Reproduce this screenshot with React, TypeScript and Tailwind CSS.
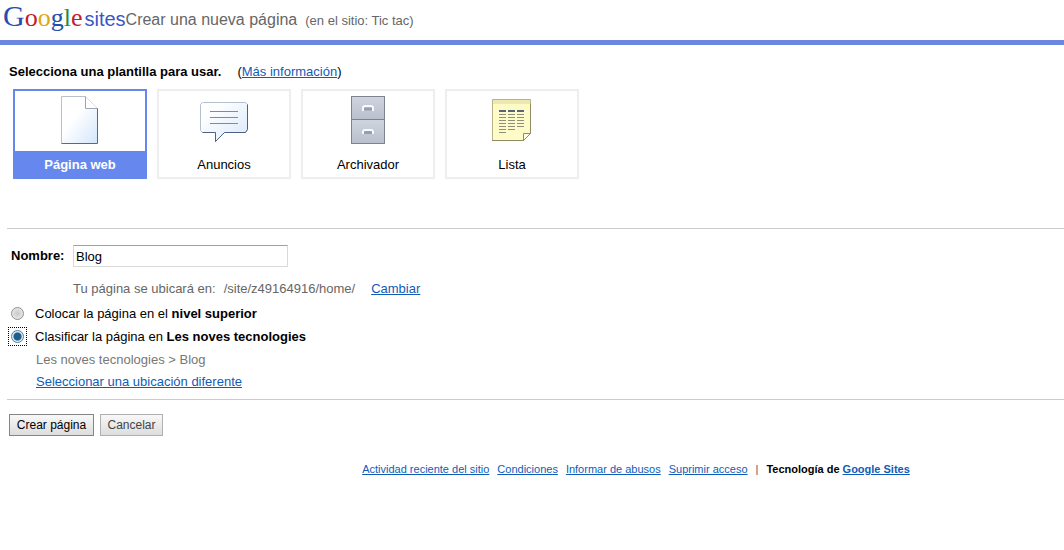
import { useState } from "react";
import type { ReactNode } from "react";

type Template = {
  id: string;
  label: string;
  icon: ReactNode;
};

const logoLetters = [
  { letter: "G", className: "text-[30px] text-[#1f4fb0]" },
  { letter: "o", className: "text-[#c3202f]" },
  { letter: "o", className: "text-[#dfa70f]" },
  { letter: "g", className: "text-[#1f4fb0]" },
  { letter: "l", className: "text-[#22903a]" },
  { letter: "e", className: "text-[#c3202f]" },
];

const footerLinks = [
  "Actividad reciente del sitio",
  "Condiciones",
  "Informar de abusos",
  "Suprimir acceso",
];

function PageIcon() {
  return (
    <svg width="40" height="50" viewBox="0 0 40 50" aria-hidden="true">
      <defs>
        <linearGradient id="page-fill" x1="0" y1="0" x2="1" y2="1">
          <stop offset="0.4" stopColor="#ffffff" />
          <stop offset="1" stopColor="#d3e6fb" />
        </linearGradient>
      </defs>
      <path d="M1.500 1.500H25.500L37.500 13.500V48.500H1.500Z" fill="url(#page-fill)" />
      <path d="M1.500 48.500V1.500H25.500L37.500 13.500" fill="none" stroke="#b9bfcb" />
      <path d="M25.500 1.500V13.500H37.500" fill="#ffffff" stroke="#9aa5b8" />
      <path d="M37.500 13.500V48.500H1.500" fill="none" stroke="#566a86" />
    </svg>
  );
}

function BubbleIcon() {
  return (
    <svg width="50" height="50" viewBox="0 0 50 50" aria-hidden="true">
      <defs>
        <linearGradient id="bubble-fill" x1="0" y1="0" x2="1" y2="1">
          <stop offset="0.2" stopColor="#ffffff" />
          <stop offset="1" stopColor="#d8e8fb" />
        </linearGradient>
      </defs>
      <path
        d="M3.500 7.500H46.500L48.500 9.500V34.500L46.500 37.500H25.500L16.500 46.500V37.500H3.500L1.500 35.500V9.500Z"
        fill="url(#bubble-fill)"
        stroke="#b4bfd0"
      />
      <path d="M48.500 9.500V34.500L46.500 37.500H25.500L16.500 46.500V37.500H3.500" fill="none" stroke="#4d6280" />
      <path d="M11 16.500H39M11 22.500H39M11 28.500H39" stroke="#7d8ba1" />
    </svg>
  );
}

function CabinetIcon() {
  return (
    <svg width="34" height="50" viewBox="0 0 34 50" aria-hidden="true">
      <defs>
        <linearGradient id="drawer-fill" x1="0" y1="0" x2="0" y2="1">
          <stop offset="0" stopColor="#cfd4df" />
          <stop offset="1" stopColor="#b9bfcc" />
        </linearGradient>
      </defs>
      <rect x="0.500" y="1.500" width="33" height="23" fill="url(#drawer-fill)" stroke="#7d828e" />
      <rect x="0.500" y="24.500" width="33" height="24" fill="url(#drawer-fill)" stroke="#7d828e" />
      <path d="M13 14H21M13 37.500H21" stroke="#979dab" strokeWidth="3" />
      <path
        d="M12 16V13Q12 11 14 11H20Q22 11 22 13V16M12 39V37Q12 35 14 35H20Q22 35 22 37V39"
        fill="none"
        stroke="#f8f9fc"
        strokeWidth="2"
      />
    </svg>
  );
}

function ListIcon() {
  return (
    <svg width="40" height="50" viewBox="0 0 40 50" aria-hidden="true">
      <path d="M0.500 4.500H38.500V38.500L31.500 45.500H0.500Z" fill="#fffbc9" stroke="#b7b384" />
      <path d="M1 5H38V9H1Z" fill="#efe8ad" />
      <path d="M38.500 38.500H31.500V45.500Z" fill="#fffce0" stroke="#8f8c62" />
      <path d="M0 45.500H31.500M38.500 9V38.500" stroke="#8f8c62" />
      <path d="M7 16H14M16 16H23M25 16H32" stroke="#566475" strokeWidth="2" />
      <path
        d="M7 19.500H14M16 19.500H23M25 19.500H32M7 22.500H14M16 22.500H23M25 22.500H32M7 25.500H14M16 25.500H23M25 25.500H32M7 28.500H14M16 28.500H23M25 28.500H32M7 31.500H14M16 31.500H23M25 31.500H32M7 34.500H14M16 34.500H23M7 37.500H14"
        stroke="#8b8f7e"
      />
    </svg>
  );
}

const templates: Template[] = [
  { id: "web", label: "Página web", icon: <PageIcon /> },
  { id: "news", label: "Anuncios", icon: <BubbleIcon /> },
  { id: "files", label: "Archivador", icon: <CabinetIcon /> },
  { id: "list", label: "Lista", icon: <ListIcon /> },
];

function TextLink({ children }: { children: ReactNode }) {
  return (
    <a href="#" className="text-[#0f5cb8] underline">
      {children}
    </a>
  );
}

function Header() {
  return (
    <header className="flex h-[45px] items-start border-b-[5px] border-[#6b87e0] pl-[3px]">
      <div className="flex items-baseline">
        <span className="font-['Liberation_Serif',serif] text-[26px] leading-8">
          {logoLetters.map(({ letter, className }, index) => (
            <span key={index} className={className}>
              {letter}
            </span>
          ))}
        </span>
        <span className="ml-[2px] text-[20px] leading-8 text-[#3a55c4]">sites</span>
      </div>
      <h1 className="flex items-baseline gap-2 pt-1 text-base leading-8 text-[#666666]">
        Crear una nueva página <span className="text-[13px]">(en el sitio: Tic tac)</span>
      </h1>
    </header>
  );
}

export default function App() {
  const [selected, setSelected] = useState("web");
  const [name, setName] = useState("Blog");
  const [location, setLocation] = useState("nested");

  return (
    <div className="bg-white font-['Liberation_Sans',Arial,sans-serif] text-[13px] leading-4 text-black">
      <Header />

      <main>
        <section className="px-[9px] pt-[19px]">
          <h2>
            <b>Selecciona una plantilla para usar.</b>
            <span className="ml-4">
              (<TextLink>Más información</TextLink>)
            </span>
          </h2>
          <div className="mt-[9px] flex flex-wrap gap-[10px] pl-1">
            {templates.map((template) => {
              const active = template.id === selected;
              return (
                <button
                  key={template.id}
                  type="button"
                  aria-pressed={active}
                  onClick={() => setSelected(template.id)}
                  className={`flex h-[90px] w-[134px] flex-col border-2 ${
                    active ? "border-[#6688ee]" : "border-[#eeeeee]"
                  }`}
                >
                  <span className="flex h-[60px] w-full justify-center pt-1">{template.icon}</span>
                  <span
                    className={`h-[26px] w-full leading-7 ${
                      active ? "bg-[#6688ee] font-bold text-white" : ""
                    }`}
                  >
                    {template.label}
                  </span>
                </button>
              );
            })}
          </div>
        </section>

        <form className="pl-[7px]" onSubmit={(event) => event.preventDefault()}>
          <div className="mt-[49px] border-y border-[#cccccc] pt-4 pb-[9px]">
            <div className="flex items-center pl-1">
              <label htmlFor="page-name" className="w-[62px] leading-[18px] font-bold">
                Nombre:
              </label>
              <input
                id="page-name"
                type="text"
                value={name}
                onChange={(event) => setName(event.target.value)}
                className="h-[22px] w-[215px] border border-[#d9d9d9] border-t-[#a0a0a0] px-[2px] outline-none"
              />
            </div>
            <p className="mt-[14px] flex pl-[66px] text-[#666666]">
              <span>Tu página se ubicará en:</span>
              <span className="ml-2">/site/z49164916/home/</span>
              <span className="ml-4">
                <TextLink>Cambiar</TextLink>
              </span>
            </p>

            <div className="mt-[7px] flex items-center pl-px">
              <Choice id="top" checked={location === "top"} onSelect={setLocation} />
              <label htmlFor="top" className="ml-2">
                Colocar la página en el <b>nivel superior</b>
              </label>
            </div>
            <div className="mt-1 flex items-center pl-px">
              <Choice id="nested" checked={location === "nested"} onSelect={setLocation} />
              <label htmlFor="nested" className="ml-2">
                Clasificar la página en <b>Les noves tecnologies</b>
              </label>
            </div>
            <p className="mt-[6px] pl-[29px] text-[#777777]">Les noves tecnologies &gt; Blog</p>
            <p className="mt-[6px] pl-[29px]">
              <TextLink>Seleccionar una ubicación diferente</TextLink>
            </p>
          </div>

          <div className="mt-[14px] flex gap-[6px] pl-[2px]">
            <button
              type="submit"
              className="h-[22px] w-[85px] border border-[#858585] bg-linear-to-b from-[#f8f8f8] to-[#dddddd] text-[12px]"
            >
              Crear página
            </button>
            <button
              type="button"
              className="h-[22px] w-[63px] border border-[#b0b0b0] bg-linear-to-b from-[#f8f8f8] to-[#dddddd] text-[12px] text-[#444444]"
            >
              Cancelar
            </button>
          </div>
        </form>
      </main>

      <footer className="mt-[25px] flex flex-wrap justify-center gap-x-2 pl-[208px] text-[11px]">
        {footerLinks.map((link) => (
          <TextLink key={link}>{link}</TextLink>
        ))}
        <span className="text-[#555555]">|</span>
        <b>
          Tecnología de <TextLink>Google Sites</TextLink>
        </b>
      </footer>
    </div>
  );
}

type ChoiceProps = {
  id: string;
  checked: boolean;
  onSelect: (id: string) => void;
};

function Choice({ id, checked, onSelect }: ChoiceProps) {
  return (
    <span
      className={`flex size-[19px] items-center justify-center border border-dotted ${
        checked ? "border-black" : "border-transparent"
      }`}
    >
      <input
        id={id}
        type="radio"
        name="location"
        checked={checked}
        onChange={() => onSelect(id)}
        className="size-[13px] appearance-none rounded-full border border-[#8e8f8f] bg-radial from-[#c8c8c8] to-[#f4f4f4] outline-none checked:border-[#5b7a96] checked:from-[#1b5f8e] checked:from-45% checked:to-[#e4eef5] checked:to-60%"
      />
    </span>
  );
}
